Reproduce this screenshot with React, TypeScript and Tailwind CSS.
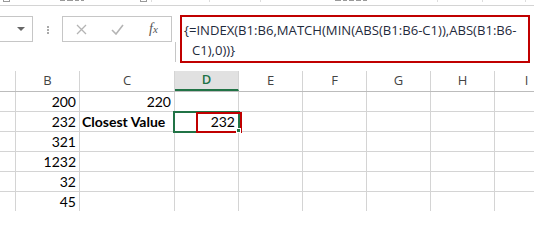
const cols = [
  { name: "", w: "w-[16px]" },
  { name: "B", w: "w-[64px]" },
  { name: "C", w: "w-[95px]" },
  { name: "D", w: "w-[64px]" },
  { name: "E", w: "w-[64px]" },
  { name: "F", w: "w-[64px]" },
  { name: "G", w: "w-[64px]" },
  { name: "H", w: "w-[64px]" },
  { name: "I", w: "w-[64px]" },
];

const rows: string[][] = [
  ["", "200", "220", ""],
  ["", "232", "Closest Value", "232"],
  ["", "321", "", ""],
  ["", "1232", "", ""],
  ["", "32", "", ""],
  ["", "45", "", ""],
];

const Ribbon = () => (
  <div className="flex h-[6px] shrink-0 items-start overflow-hidden border-b border-[#d4d4d4]">
    <div className="ml-[3px] h-[2px] w-[7px] border-x border-b border-[#999]" />
    <div className="ml-[50px] flex gap-[2px]">
      <div className="h-[1px] w-[5px] bg-[#999]" />
      <div className="h-[1px] w-[6px] bg-[#999]" />
      <div className="h-[1px] w-[4px] bg-[#999]" />
      <div className="h-[1px] w-[3px] bg-[#999]" />
    </div>
    <div className="ml-[56px] h-[2px] w-[7px] border-x border-b border-[#999]" />
    <div className="ml-[4px] h-[2px] w-px bg-[#ddd]" />
    <div className="ml-[57px] h-[2px] w-px bg-[#ddd]" />
    <div className="ml-[50px] h-[2px] w-px bg-[#ddd]" />
    <div className="ml-[74px] flex gap-[2px]">
      <div className="h-[1px] w-[6px] bg-[#999]" />
      <div className="h-[1px] w-[4px] bg-[#999]" />
      <div className="h-[1px] w-[5px] bg-[#999]" />
      <div className="h-[1px] w-[5px] bg-[#999]" />
      <div className="h-[1px] w-[4px] bg-[#999]" />
    </div>
    <div className="ml-[70px] h-[2px] w-px bg-[#ddd]" />
    <div className="ml-[44px] h-[2px] w-px bg-[#ddd]" />
    <div className="ml-[42px] h-[2px] w-px bg-[#ddd]" />
  </div>
);

const FormulaRow = () => (
  <div className="flex h-[65px] shrink-0 items-start font-['Open_Sans',sans-serif]">
    <div className="mt-[10px] flex h-[26px] w-[33px] items-center justify-end border border-l-0 border-[#c6c6c6] pr-[7px]">
      <div className="h-0 w-0 border-x-[4px] border-t-[4px] border-x-transparent border-t-[#666]" />
    </div>
    <div className="ml-[14px] mt-[20px] flex flex-col gap-[1px]">
      <div className="h-[2px] w-[2px] bg-[#aaa]" />
      <div className="h-[2px] w-[2px] bg-[#aaa]" />
      <div className="h-[2px] w-[2px] bg-[#aaa]" />
    </div>
    <div className="ml-[13px] mt-[10px] flex h-[26px] w-[110px] items-center border border-[#c6c6c6]">
      <svg className="ml-[13px]" width="11" height="11" viewBox="0 0 11 11">
        <path d="M1 1 L10 10 M10 1 L1 10" stroke="#b4b4b4" strokeWidth="1.3" fill="none" />
      </svg>
      <svg className="ml-[24px]" width="13" height="11" viewBox="0 0 13 11">
        <path d="M1 6 L5 10 L12 1" stroke="#b4b4b4" strokeWidth="1.6" fill="none" />
      </svg>
      <span className="ml-[25px] font-['Liberation_Serif',serif] text-[14px] italic leading-none text-[#555]">
        f<span className="text-[11px]">x</span>
      </span>
    </div>
    <div className="ml-[3px] mt-[36px] h-[20px] w-px bg-[#c6c6c6]" />
    <div className="ml-[4px] mt-[9px] h-[48px] w-[350px] border-2 border-[#c00000] pl-[2px] pt-[3px] text-[13.1px] leading-[20px] text-[#1f2a3c]">
      <div>{"{=INDEX(B1:B6,MATCH(MIN(ABS(B1:B6-C1)),ABS(B1:B6-"}</div>
      <div className="pl-[8px]">{"C1),0))}"}</div>
    </div>
  </div>
);

const Header = () => (
  <div className="flex h-[21px] shrink-0 border-b border-[#bcbcbc] font-['Open_Sans',sans-serif] text-[13px] text-[#444]">
    {cols.map((c) => (
      <div
        key={c.name || "A"}
        className={`${c.w} flex shrink-0 items-center justify-center border-r border-[#d4d4d4] ${
          c.name === "D" ? "border-b-2 border-b-[#217346] bg-[#e1e1e1] font-semibold text-[#217346]" : ""
        }`}
      >
        {c.name}
      </div>
    ))}
  </div>
);

export default function App() {
  return (
    <div className="flex h-[211px] w-[534px] flex-col overflow-hidden bg-white">
      <Ribbon />
      <FormulaRow />
      <Header />
      <div className="relative font-['Lato',sans-serif] text-[14px] text-black">
        {rows.map((r, i) => (
          <div key={i} className="flex h-[20px] border-b border-[#d4d4d4]">
            {cols.map((c, j) => {
              const v = r[j] ?? "";
              const isText = v !== "" && isNaN(Number(v));
              return (
                <div
                  key={j}
                  className={`${c.w} flex shrink-0 items-end overflow-visible whitespace-nowrap border-r border-[#d4d4d4] pb-[1px] leading-[17px] ${
                    isText ? "justify-start pl-[2px] font-bold" : "justify-end pr-[3px]"
                  }`}
                >
                  {v}
                </div>
              );
            })}
          </div>
        ))}
        {/* active cell D2 */}
        <div className="absolute left-[173px] top-[19px] h-[22px] w-[67px] border-2 border-[#217346]" />
        <div className="absolute left-[196px] top-[20px] h-[21px] w-[46px] border-2 border-[#c00000]" />
        <div className="absolute left-[236px] top-[36px] h-[5px] w-[5px] border border-white bg-[#217346]" />
      </div>
    </div>
  );
}
